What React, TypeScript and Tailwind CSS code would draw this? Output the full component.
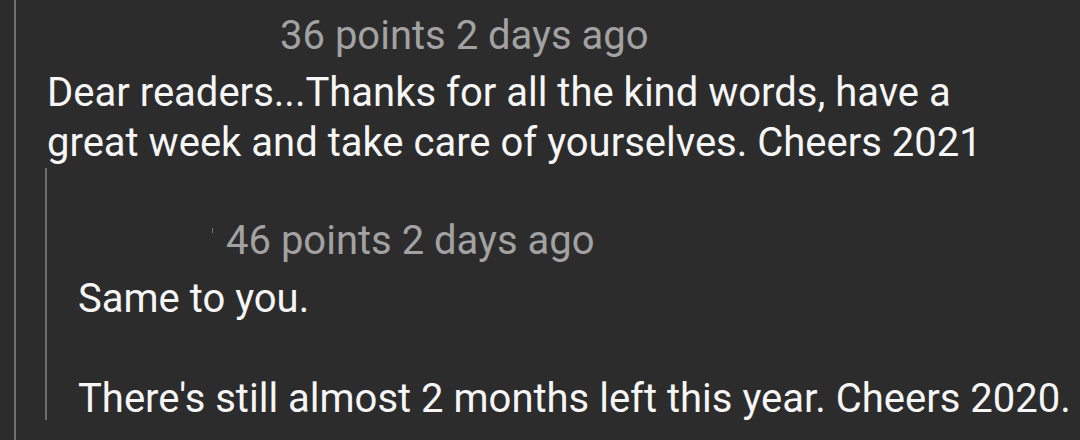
const Meta = ({ text }: { text: string }) => (
  <span className="text-[40px] leading-[50px] text-[#a2a2a2]">{text}</span>
);

export default function App() {
  return (
    <div className="flex h-[440px] w-[1080px] overflow-hidden bg-[#2c2c2c] font-['Roboto',sans-serif] antialiased">
      <div className="ml-[14px] w-[2px] shrink-0 bg-[#707070]" />
      <div className="flex-1 pl-[31px] pt-[11px]">
        {/* top comment */}
        <div className="ml-[233px]">
          <Meta text="36 points 2 days ago" />
        </div>
        <p className="mt-[7px] max-w-[975px] text-[40px] leading-[50px] text-[#f6f6f6]">
          Dear readers...Thanks for all the kind words, have a great
          week and take care of yourselves. Cheers 2021
        </p>

        {/* reply */}
        <div className="-ml-[2px] flex h-[254px]">
          <div className="mb-[2px] w-[2px] shrink-0 bg-[#6c6c6c]" />
          <div className="flex-1 pl-[31px] pt-[48px]">
            <div className="flex">
              <span className="ml-[134px] mt-[12px] h-[5px] w-px bg-[#777]" />
              <span className="ml-[13px]">
                <Meta text="46 points 2 days ago" />
              </span>
            </div>
            <div className="mt-[8px] text-[40px] leading-[50px] text-[#f6f6f6]">
              <p>Same to you.</p>
              <p className="mt-[50px]">
                There's still almost 2 months left this year. Cheers 2020.
              </p>
            </div>
          </div>
        </div>
      </div>
    </div>
  );
}
